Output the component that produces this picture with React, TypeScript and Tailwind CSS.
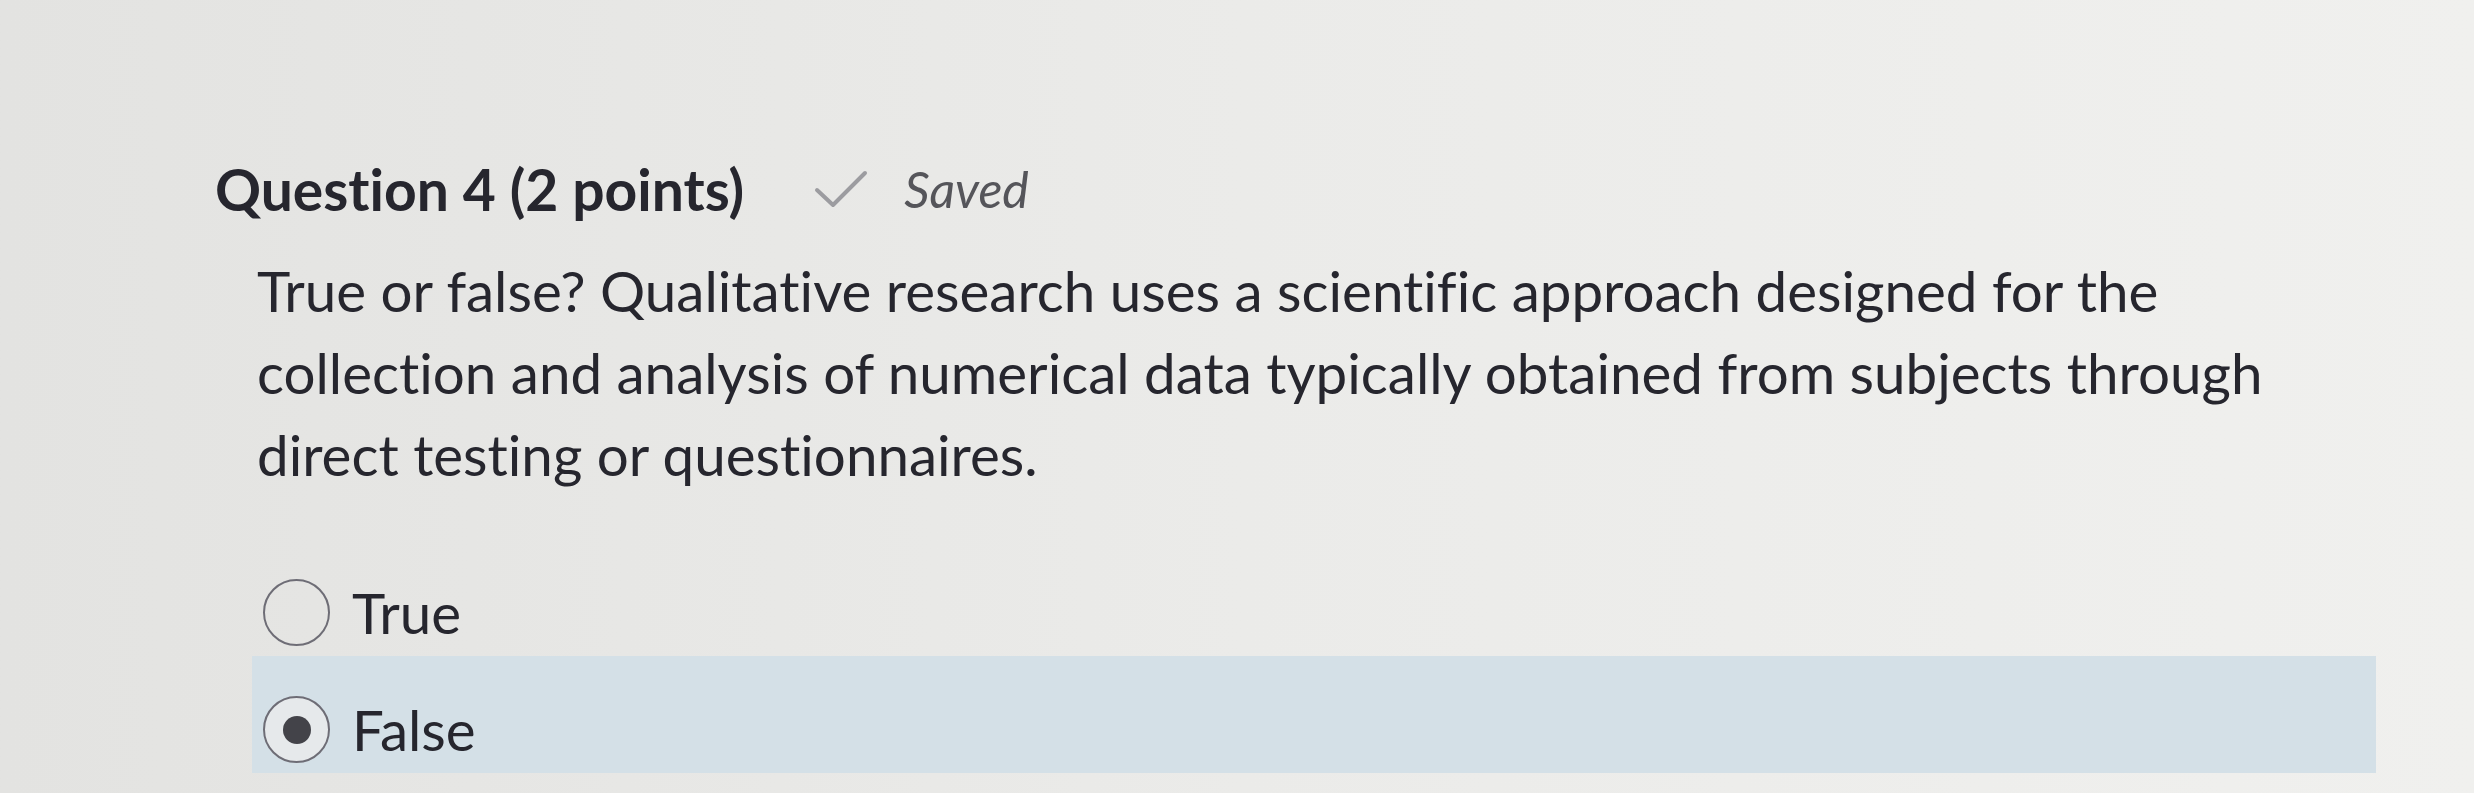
import React from "react";

function Check() {
  return (
    <svg width="54" height="40" viewBox="0 0 54 40" fill="none">
      <path d="M3 21 L19 36 L51 4" stroke="#9c9ca0" strokeWidth="4" strokeLinecap="round" strokeLinejoin="round" />
    </svg>
  );
}

function Radio({ checked }: { checked?: boolean }) {
  return (
    <span
      className={
        checked
          ? "flex h-[67px] w-[67px] shrink-0 items-center justify-center rounded-full border-[2.5px] border-[#6e6d76] bg-[#e6e9eb]"
          : "flex h-[67px] w-[67px] shrink-0 items-center justify-center rounded-full border-[2.5px] border-[#6e6d76]"
      }
    >
      {checked && <span className="h-[28px] w-[28px] rounded-full bg-[#434349]" />}
    </span>
  );
}

export default function App() {
  return (
    <div className="min-h-[793px] w-full bg-gradient-to-r from-[#e3e3e1] via-[#ebebe9] to-[#f0f0ee] font-['Lato','Noto_Sans',sans-serif] text-[#26262e] [font-variant-ligatures:none]">
      <div className="pt-[154px] pl-[215px]">
        <div className="flex h-[70px] items-center">
          <h2 className="text-[57px] font-bold leading-[70px]">Question 4 (2 points)</h2>
          <span className="ml-[70px]">
            <Check />
          </span>
          <span className="ml-[36px] text-[50px] italic leading-[70px] text-[#55555a]">Saved</span>
        </div>

        <p className="mt-[25px] pl-[42px] text-[56.5px] leading-[82px]">
          True or false? Qualitative research uses a scientific approach designed for the
          <br />
          collection and analysis of numerical data typically obtained from subjects through
          <br />
          direct testing or questionnaires.
        </p>

        <div className="mt-[84px] pl-[37px] pr-[98px]">
          <label className="flex h-[67px] items-center gap-[22px] pl-[11px]">
            <Radio />
            <span className="text-[56.5px] leading-[67px]">True</span>
          </label>
          <label className="mt-[10px] flex items-center gap-[22px] bg-[#d4e0e7] pt-[40px] pb-[10px] pl-[11px]">
            <Radio checked />
            <span className="text-[56.5px] leading-[67px]">False</span>
          </label>
        </div>
      </div>
    </div>
  );
}
